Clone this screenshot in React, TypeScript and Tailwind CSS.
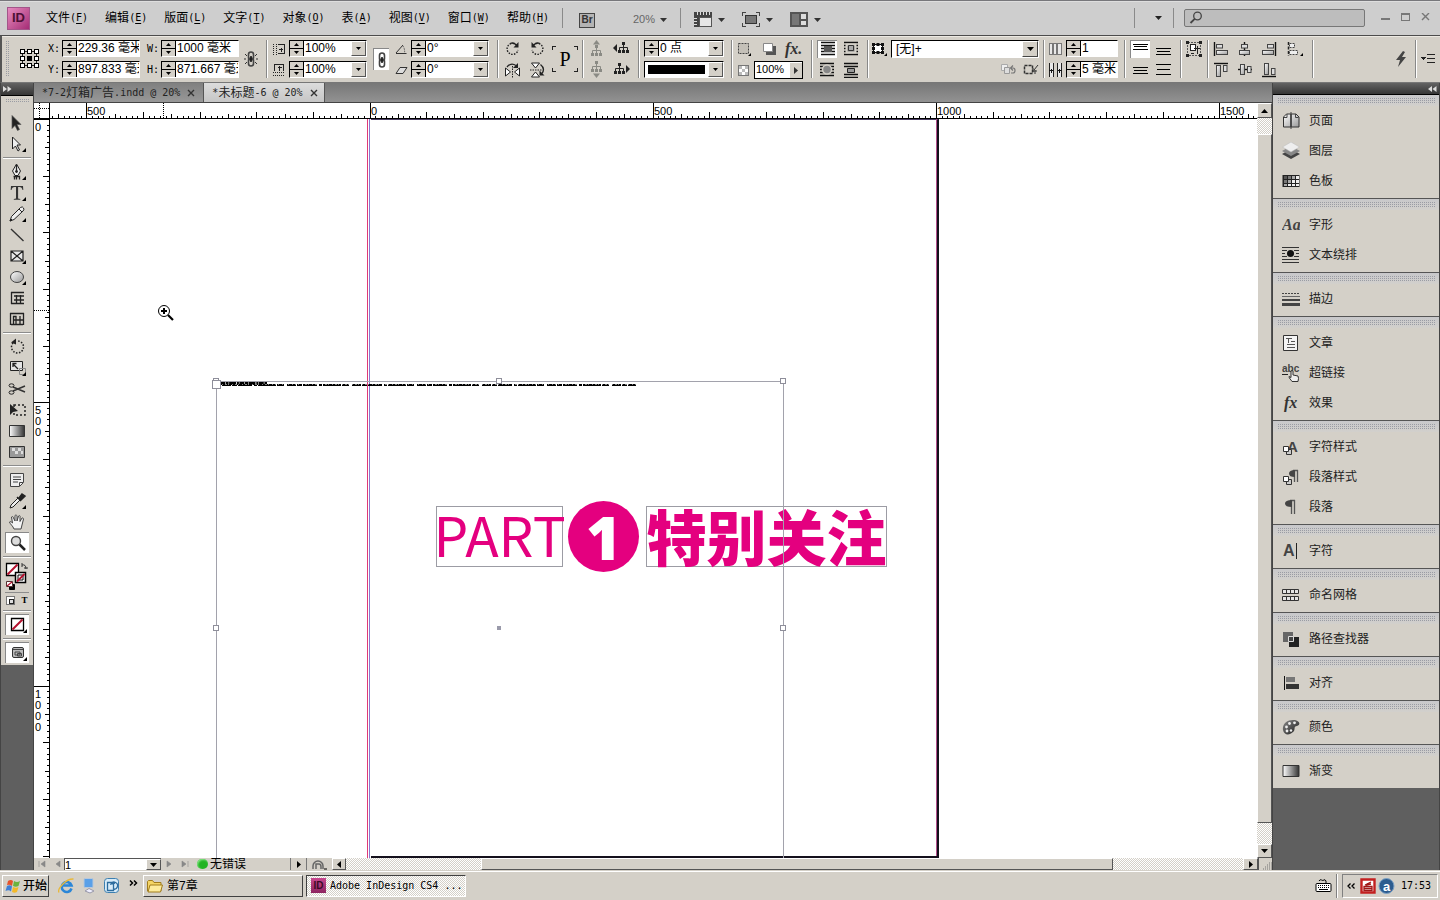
import React, { type ReactNode } from "react";

type SvgProps = { w?: number; h?: number; children: ReactNode; crisp?: boolean };

const Ico = ({ w = 16, h = 16, children, crisp }: SvgProps) => (
  <svg
    width={w}
    height={h}
    viewBox={`0 0 ${w} ${h}`}
    fill="none"
    stroke="#222"
    shapeRendering={crisp ? "crispEdges" : "auto"}
    className="shrink-0"
    aria-hidden="true"
  >
    {children}
  </svg>
);

const Down = ({ color = "#000" }: { color?: string }) => (
  <Ico w={7} h={4}>
    <path d="M0 0h7L3.5 4z" fill={color} stroke="none" />
  </Ico>
);

const Gradients = () => (
  <svg className="absolute h-0 w-0" aria-hidden="true">
    <defs>
      <linearGradient id="lr" x1="0" x2="1" y1="0" y2="0">
        <stop offset="0" stopColor="#fff" />
        <stop offset="1" stopColor="#333" />
      </linearGradient>
      <linearGradient id="soft" x1="0" x2="1" y1="0" y2="1">
        <stop offset="0" stopColor="#fff" />
        <stop offset="1" stopColor="#999" />
      </linearGradient>
      <linearGradient id="dark" x1="0" x2="1" y1="0" y2="1">
        <stop offset="0" stopColor="#888" />
        <stop offset="1" stopColor="#1a1a1a" />
      </linearGradient>
    </defs>
  </svg>
);

/* ---------- menu bar ---------- */

const menus: [string, string][] = [
  ["文件", "F"],
  ["编辑", "E"],
  ["版面", "L"],
  ["文字", "T"],
  ["对象", "O"],
  ["表", "A"],
  ["视图", "V"],
  ["窗口", "W"],
  ["帮助", "H"],
];

const IdLogo = ({ small }: { small?: boolean }) => (
  <span
    className={
      small
        ? "flex h-[15px] w-[15px] shrink-0 items-center justify-center bg-linear-to-b from-[#c9488f] to-[#8d2460] text-[10px] font-bold text-[#3a0a26]"
        : "flex h-[23px] w-[23px] shrink-0 items-center justify-center border border-[#a3558a] bg-linear-to-br from-[#e68bc0] to-[#a52a76] text-[13px] font-bold text-[#4d0f35]"
    }
  >
    ID
  </span>
);

const VLine = () => <span className="h-5 w-px shrink-0 bg-[#8a8a8a]" />;

const MenuBar = () => (
  <header className="flex h-9 shrink-0 items-center border-t border-b border-t-[#77777b] border-b-[#4c4c4c] bg-[#cecece] pl-[7px] shadow-[inset_0_1px_0_#dedede]">
    <IdLogo />
    <nav className="ml-4 flex shrink-0 gap-[17px]">
      {menus.map(([name, key]) => (
        <button key={key} type="button" className="flex items-center text-xs leading-4 text-black">
          {name}
          <span className="font-['DejaVu_Sans_Mono',monospace] text-[10px]">
            (<u className="underline-offset-2">{key}</u>)
          </span>
        </button>
      ))}
    </nav>
    <div className="ml-[13px] flex shrink-0 items-center">
      <VLine />
      <button
        type="button"
        aria-label="Bridge"
        className="mt-1 ml-4 flex h-[15px] w-4 items-center justify-center border border-[#444] bg-[#b4b4b4] text-[10px] leading-none font-bold text-[#333]"
      >
        Br
      </button>
      <button type="button" className="mt-[3px] ml-[38px] flex items-center gap-[5px] text-[11px] text-[#666]">
        20% <Down color="#333" />
      </button>
      <span className="ml-[13px] flex">
        <VLine />
      </span>
      <button type="button" aria-label="查看选项" className="mt-[3px] ml-[13px] flex items-center gap-[6px]">
        <Ico w={18} h={15} crisp>
          <path d="M0 0h18v5H5v10H0z" fill="#444" stroke="none" />
          <path d="M5 5h12v9H5z" fill="#e6e6e6" stroke="#555" />
          <path d="M3.5 0v3M6.5 0v3M9.5 0v3M12.5 0v3M15.5 0v3M0 6.5h3M0 9.5h3M0 12.5h3" stroke="#ddd" />
        </Ico>
        <Down color="#333" />
      </button>
      <button type="button" aria-label="屏幕模式" className="mt-[3px] ml-[17px] flex items-center gap-[6px]">
        <Ico w={18} h={15} crisp>
          <path d="M.5 4V.5H4M14 .5h3.5V4M17.5 11v3.5H14M4 14.5H.5V11" stroke="#444" />
          <path d="M3.5 3.5h11v8h-11z" fill="#777" stroke="#333" />
        </Ico>
        <Down color="#333" />
      </button>
      <button type="button" aria-label="排列文档" className="mt-[3px] ml-[17px] flex items-center gap-[6px]">
        <Ico w={18} h={15} crisp>
          <path d="M0 0h18v15H0z" fill="#555" stroke="none" />
          <path d="M2 2h7v11H2z" fill="#777" stroke="none" />
          <path d="M11 2h5v5h-5zM11 9h5v4h-5z" fill="#ddd" stroke="none" />
        </Ico>
        <Down color="#333" />
      </button>
    </div>
    <div className="ml-auto flex shrink-0 items-center">
      <VLine />
      <button type="button" aria-label="工作区" className="ml-5 flex w-[18px]">
        <Down color="#222" />
      </button>
      <VLine />
      <label className="ml-2.5 flex h-[18px] w-[181px] items-center rounded-[2px] border border-[#777] bg-[#bdbdbd] pl-1">
        <Ico w={14} h={14}>
          <circle cx="8.5" cy="5" r="3.8" stroke="#444" strokeWidth="1.3" />
          <path d="M5.7 7.8L1.5 12" stroke="#444" strokeWidth="1.8" />
        </Ico>
        <input type="search" aria-label="搜索" className="w-full min-w-0 bg-transparent text-xs outline-none" />
      </label>
      <div className="ml-4 flex w-[59px] items-center gap-[11px]">
        <button type="button" aria-label="最小化">
          <Ico w={9} h={10} crisp>
            <path d="M0 5h9v2H0z" fill="#777" stroke="none" />
          </Ico>
        </button>
        <button type="button" aria-label="最大化">
          <Ico w={9} h={10} crisp>
            <path d="M.5.5h8v6.500h-8zM0 1.500h9" stroke="#777" />
          </Ico>
        </button>
        <button type="button" aria-label="关闭">
          <Ico w={9} h={10}>
            <path d="M1 0l7 7M8 0L1 7" stroke="#777" strokeWidth="1.4" />
          </Ico>
        </button>
      </div>
    </div>
  </header>
);

/* ---------- control bar ---------- */

const Spinner = ({ label }: { label: string }) => (
  <span className="flex w-[14px] shrink-0 flex-col divide-y divide-black border-r border-black bg-[#d4d0c8]">
    <button type="button" aria-label={`${label}增加`} className="flex flex-1 items-center justify-center">
      <Ico w={5} h={3}>
        <path d="M0 3h5L2.500 0z" fill="#000" stroke="none" />
      </Ico>
    </button>
    <button type="button" aria-label={`${label}减少`} className="flex flex-1 items-center justify-center">
      <Ico w={5} h={3}>
        <path d="M0 0h5L2.500 3z" fill="#000" stroke="none" />
      </Ico>
    </button>
  </span>
);

const DropButton = ({ label }: { label: string }) => (
  <button
    type="button"
    aria-label={label}
    className="flex w-[15px] shrink-0 items-center justify-center border border-t-white border-r-[#555] border-b-[#555] border-l-white bg-[#d4d0c8]"
  >
    <Ico w={5} h={3}>
      <path d="M0 0h5L2.500 3z" fill="#000" stroke="none" />
    </Ico>
  </button>
);

const boxed = "flex h-[17px] border border-t-black border-r-white border-b-white border-l-black bg-white";

const Field = ({ label, value, drop }: { label: string; value: string; drop?: boolean }) => (
  <span className={`${boxed} min-w-0 flex-1`}>
    <Spinner label={label} />
    <input
      aria-label={label}
      defaultValue={value}
      className="w-full min-w-0 bg-transparent pl-px text-xs leading-[15px] text-black outline-none"
    />
    {drop && <DropButton label={`${label}列表`} />}
  </span>
);

const Rows = ({ className, children }: { className: string; children: ReactNode }) => (
  <div className={`flex shrink-0 flex-col justify-center gap-[3px] ${className}`}>{children}</div>
);
const Row = ({ className = "", children }: { className?: string; children: ReactNode }) => (
  <div className={`flex h-[18px] items-center ${className}`}>{children}</div>
);
const Sep = () => <span className="my-1 w-[2px] shrink-0 border-l border-[#888] bg-white" />;

const LinkIcon = ({ broken }: { broken?: boolean }) => (
  <Ico w={14} h={16}>
    <rect x="4.500" y="1" width="5" height="8" rx="2.500" stroke="#444" strokeWidth="1.600" />
    <rect x="4.500" y="7" width="5" height="8" rx="2.500" stroke="#444" strokeWidth="1.600" />
    <path d="M7 5v6" stroke="#111" strokeWidth="1.500" />
    {broken && <path d="M1 3l2 2M13 3l-2 2M0 8h2M12 8h2M1 13l2-2M13 13l-2-2" stroke="#333" />}
  </Ico>
);

const Rotate = ({ ccw }: { ccw?: boolean }) => (
  <Ico w={15} h={15}>
    <g transform={ccw ? "matrix(-1 0 0 1 15 0)" : undefined}>
      <path d="M11.500 4A5.500 5.500 0 1 0 13 9" stroke="#222" strokeWidth="1.400" strokeDasharray="1.500 1.300" />
      <path d="M5 2.500Q9 1 11 4" stroke="#222" strokeWidth="1.300" />
      <path d="M13.500 1v5.500H8.500z" fill="#222" stroke="none" />
    </g>
  </Ico>
);

const Flip = ({ vertical }: { vertical?: boolean }) => (
  <Ico w={15} h={16}>
    <g transform={vertical ? "rotate(90 7.500 8)" : undefined}>
      <path d="M.5 6v8l5-4zM14.500 6v8l-5-4z" fill="#fff" stroke="#222" />
      <path d="M7.500 4v12" strokeDasharray="1.500 1" />
      <path d="M2 5Q6 0 11 3.500" strokeWidth="1.300" />
      <path d="M13 1v5H8z" fill="#222" stroke="none" />
    </g>
  </Ico>
);

const Tree = ({ arrow }: { arrow: "up" | "down" | "left" | "right" }) => {
  const faint = arrow === "up" || arrow === "down";
  const c = faint ? "#8a8a84" : "#222";
  const oy = arrow === "up" ? 5 : arrow === "down" ? 0 : 2;
  const ox = arrow === "left" ? 5 : 1;
  return (
    <Ico w={17} h={17}>
      <g transform={`translate(${ox} ${oy})`} stroke={c}>
        <path d="M5.500 3v2.500M1.500 8V5.500h8V8M5.500 5v3" />
        <path d="M4 0h3v3H4zM0 8h3v3H0zM4 8h3v3H4zM8 8h3v3H8z" fill={c} stroke="none" />
      </g>
      {arrow === "up" && <path d="M3 4.500h7L6.500 0z" fill={c} stroke="none" />}
      {arrow === "down" && <path d="M3 12.500h7L6.500 17z" fill={c} stroke="none" />}
      {arrow === "left" && <path d="M4 4v8L0 8z" fill={c} stroke="none" />}
      {arrow === "right" && <path d="M13 4v8l4-4z" fill={c} stroke="none" />}
    </Ico>
  );
};

const WrapIcon = ({ kind }: { kind: 0 | 1 | 2 | 3 }) => (
  <Ico w={16} h={16}>
    <path
      d={kind === 3 ? "M1 1.500h14M1 4.500h14M1 12.500h14M1 15.500h14" : "M1 1.500h14M1 4.500h14M1 7.500h14M1 10.500h14M1 13.500h14"}
      strokeWidth="1.400"
      stroke="#111"
    />
    {kind === 0 && <path d="M4 5h8v6H4z" fill="#555" stroke="none" />}
    {kind === 1 && <path d="M3.500 3.500h9v8h-9z" fill="#888" stroke="#d4d0c8" strokeWidth="2" />}
    {kind === 1 && <path d="M5.500 4.500h5v5h-5z" fill="#aaa" stroke="#333" />}
    {kind === 2 && <circle cx="8" cy="7.500" r="4.500" fill="#888" stroke="#d4d0c8" strokeWidth="1.500" />}
    {kind === 3 && <path d="M4.500 6.500h7v4h-7z" fill="#999" />}
  </Ico>
);

const AlignIcon = ({ kind }: { kind: "l" | "c" | "r" | "t" | "m" | "b" }) => {
  const turn = kind === "t" || kind === "m" || kind === "b";
  const k = kind === "t" ? "l" : kind === "m" ? "c" : kind === "b" ? "r" : kind;
  const line = k === "l" ? 1.5 : k === "c" ? 7.5 : 14.5;
  const long = k === "l" ? 3.5 : k === "c" ? 2.5 : 1.5;
  const short = k === "l" ? 3.5 : k === "c" ? 4.5 : 6.5;
  return (
    <Ico w={16} h={16}>
      <g transform={turn ? "matrix(0 1 1 0 0 0)" : undefined}>
        <path d={`M${line} 1v14`} stroke="#111" strokeWidth="1.400" />
        <rect x={long} y={turn ? 3.5 : 9.5} width={k === "c" ? 10 : 11} height="4" fill="url(#soft)" stroke="#444" />
        <rect x={short} y={turn ? 10.5 : 3.5} width="6" height="3.500" fill="#ddd" stroke="#444" />
      </g>
    </Ico>
  );
};

const dots = "bg-[conic-gradient(#9a9ca4_25%,transparent_0)] bg-[length:2px_2px]";

const ControlBar = () => (
  <section
    aria-label="控制"
    className="flex h-[47px] shrink-0 items-stretch overflow-hidden border-b border-l-2 border-b-[#777] border-l-[#555] bg-[#d4d0c8] shadow-[inset_0_1px_0_#ece9e2]"
  >
    <div className="flex w-[18px] shrink-0 items-center pl-[3px]">
      <span className={`h-9 w-1 ${dots}`} />
    </div>
    <div className="flex w-7 shrink-0 items-center">
      <Ico w={20} h={20} crisp>
        <path d="M2.500 2.500h14v14h-14z" />
        <path d="M.5.500h4v4h-4zM7.500.500h4v4h-4zM14.500.500h4v4h-4zM.5 7.500h4v4h-4zM14.500 7.500h4v4h-4zM.5 14.500h4v4h-4zM7.500 14.500h4v4h-4zM14.500 14.500h4v4h-4z" fill="#fff" stroke="#000" />
        <path d="M7 7h5v5H7z" fill="#000" stroke="none" />
      </Ico>
    </div>
    <Rows className="w-[99px] pr-[7px]">
      {[["X:", "229.36 毫米"], ["Y:", "897.833 毫米"]].map(([l, v]) => (
        <Row key={l}>
          <span className="w-[14px] shrink-0 font-['DejaVu_Sans_Mono',monospace] text-[10px]">{l}</span>
          <Field label={l} value={v} />
        </Row>
      ))}
    </Rows>
    <Rows className="w-[97px] pr-[5px]">
      {[["W:", "1000 毫米"], ["H:", "871.667 毫米"]].map(([l, v]) => (
        <Row key={l}>
          <span className="w-[14px] shrink-0 font-['DejaVu_Sans_Mono',monospace] text-[10px]">{l}</span>
          <Field label={l} value={v} />
        </Row>
      ))}
    </Rows>
    <div className="flex w-[22px] shrink-0 items-center">
      <LinkIcon broken />
    </div>
    <Sep />
    <Rows className="w-[105px] pr-1.5 pl-1">
      <Row className="gap-[3px]">
        <Ico w={14} h={14} crisp>
          <path d="M1.500 2v11M4.500 2v11" strokeDasharray="1 1" />
          <path d="M5.500 2.500h7v9h-7M7 7.500h4M9.500 5.500v4" />
        </Ico>
        <Field label="X 缩放百分比" value="100%" drop />
      </Row>
      <Row className="gap-[3px]">
        <Ico w={14} h={14} crisp>
          <path d="M1 12.500h12M1 9.500h12" strokeDasharray="1 1" />
          <path d="M2.500 8V1.500h9V8M7.500 3v5M5.500 4.500h4" />
        </Ico>
        <Field label="Y 缩放百分比" value="100%" drop />
      </Row>
    </Rows>
    <div className="flex w-[22px] shrink-0 items-center">
      <button
        type="button"
        aria-label="约束缩放比例"
        className="flex h-[22px] w-4 items-center justify-center border-t border-l border-[#888] bg-white"
      >
        <LinkIcon />
      </button>
    </div>
    <Rows className="w-[102px] pr-2">
      <Row className="gap-[3px]">
        <Ico w={13} h={12}>
          <path d="M1 10.500h10.500M1 10L8 2" stroke="#333" />
          <path d="M8 3q2 3 1.500 7" stroke="#555" strokeDasharray="1.500 1" />
        </Ico>
        <Field label="旋转角度" value="0°" drop />
      </Row>
      <Row className="gap-[3px]">
        <Ico w={13} h={12}>
          <path d="M1 9.500l4-6h7l-4 6z" fill="#ddd" stroke="#333" />
        </Ico>
        <Field label="切变角度" value="0°" drop />
      </Row>
    </Rows>
    <Sep />
    <Rows className="w-[53px] pl-1.5">
      <Row className="gap-2.5">
        <Rotate />
        <Rotate ccw />
      </Row>
      <Row className="gap-2.5">
        <Flip />
        <Flip vertical />
      </Row>
    </Rows>
    <div className="flex w-[30px] shrink-0 items-center">
      <span className="relative flex h-[26px] w-[26px] items-center justify-center font-['Liberation_Serif',serif] text-xl leading-none">
        P
        <span className="absolute inset-0">
          <Ico w={26} h={26} crisp>
            <path d="M.5 4V.500H4M22 .500h3.500V4M25.500 22v3.500H22M4 25.500H.500V22" />
          </Ico>
        </span>
      </span>
    </div>
    <Sep />
    <Rows className="w-[54px] pl-1.5">
      <Row className="gap-1.5">
        <Tree arrow="up" />
        <Tree arrow="left" />
      </Row>
      <Row className="gap-1.5">
        <Tree arrow="down" />
        <Tree arrow="right" />
      </Row>
    </Rows>
    <Sep />
    <Rows className="w-[91px] pr-[7px] pl-1">
      <Row>
        <Field label="描边粗细" value="0 点" drop />
      </Row>
      <Row>
        <span className={`${boxed} flex-1`}>
          <span className="m-[3px] flex-1 bg-black" />
          <DropButton label="描边类型" />
        </span>
      </Row>
    </Rows>
    <Sep />
    <Rows className="w-[78px] pl-1">
      <Row className="gap-2">
        <Ico>
          <path d="M1.500 2.500h10v10h-10z" fill="#c4c0b8" stroke="#444" strokeDasharray="2 1" />
          <path d="M14 12v3h-3z" fill="#000" stroke="none" />
        </Ico>
        <Ico>
          <path d="M5 5h10v9H5z" fill="#555" stroke="none" />
          <path d="M2.500 2.500h9v8h-9z" fill="#fff" stroke="#888" />
        </Ico>
        <span className="font-['Liberation_Serif',serif] text-base leading-4 font-bold text-[#333] italic">fx.</span>
      </Row>
      <Row className="gap-1">
        <Ico w={13} h={14} crisp>
          <path d="M1.500 2.500h10v10h-10z" fill="#fff" stroke="#777" />
          <path d="M2 3h3v3H2zM8 3h3v3H8zM5 6h3v3H5zM2 9h3v3H2zM8 9h3v3H8z" fill="#bbb" stroke="none" />
        </Ico>
        <span className="flex h-[18px] w-[49px] border border-black bg-white">
          <input
            aria-label="不透明度"
            defaultValue="100%"
            className="w-full min-w-0 bg-transparent pl-px text-[11px] outline-none"
          />
          <button
            type="button"
            aria-label="不透明度滑块"
            className="flex w-[13px] shrink-0 items-center justify-center border-t border-l border-white bg-[#d4d0c8]"
          >
            <Ico w={4} h={7}>
              <path d="M0 0v7l4-3.500z" fill="#333" stroke="none" />
            </Ico>
          </button>
        </span>
      </Row>
    </Rows>
    <Sep />
    <Rows className="w-[54px] pl-1">
      <Row className="gap-1.5">
        <button type="button" aria-label="无文本绕排" className="flex h-[18px] w-5 items-center justify-center border-t border-l border-[#888] bg-white">
          <WrapIcon kind={0} />
        </button>
        <WrapIcon kind={1} />
      </Row>
      <Row className="gap-1.5">
        <span className="flex w-5 justify-center">
          <WrapIcon kind={2} />
        </span>
        <WrapIcon kind={3} />
      </Row>
    </Rows>
    <Sep />
    <Rows className="w-[174px] pr-1 pl-0.5">
      <Row className="gap-1">
        <Ico>
          <path d="M2.500 3.500h9v8h-9z" fill="#fff" stroke="#111" />
          <path d="M1 2h3v3H1zM5.500 2h3v3h-3zM10 2h3v3h-3zM1 6h3v3H1zM10 6h3v3h-3zM1 10h3v3H1zM5.500 10h3v3h-3zM10 10h3v3h-3z" fill="#111" stroke="none" />
          <path d="M16 12v3h-3z" fill="#000" stroke="none" />
        </Ico>
        <span className="flex h-[18px] flex-1 border border-t-black border-r-white border-b-white border-l-black bg-white">
          <select aria-label="对象样式" className="min-w-0 flex-1 appearance-none bg-transparent pl-1 text-xs leading-4 text-black outline-none">
            <option>[无]+</option>
          </select>
          <span className="flex w-4 items-center justify-center border border-t-white border-r-[#444] border-b-[#444] border-l-white bg-[#d4d0c8]">
            <Down />
          </span>
        </span>
      </Row>
      <Row className="justify-end gap-[7px]">
        <Ico>
          <path d="M1.500 2.500h6v6h-6z" fill="#eee" stroke="#aaa" />
          <path d="M4.500 5.500h5v6h-5z" fill="#ddd" stroke="#999" />
          <path d="M11 11h2q2 0 2-2.500T13 6h-2M13 3.500L10.500 6 13 8.500" stroke="#777" strokeWidth="1.200" />
        </Ico>
        <Ico>
          <path d="M1.500 3.500h8v8h-8z" stroke="#333" strokeWidth="1.500" strokeDasharray="3 1" />
          <path d="M15 3l-4 5M10 6v4M12 8v4M9 9h5" stroke="#333" />
        </Ico>
      </Row>
    </Rows>
    <Sep />
    <Rows className="w-[79px] pr-1.5 pl-[3px]">
      <Row className="gap-[3px]">
        <Ico w={15} h={14} crisp>
          <path d="M1.500 1.500h3v11h-3zM5.500 1.500h3v11h-3zM9.500 1.500h4v11h-4z" fill="#e8e8e8" stroke="#777" />
        </Ico>
        <Field label="栏数" value="1" />
      </Row>
      <Row className="gap-[3px]">
        <Ico w={15} h={16} crisp>
          <path d="M1 1h5v14H1zM9 1h5v14H9z" fill="#e8e8e8" stroke="none" />
          <path d="M1.500 1v14M13.500 1v14M5.500 1v14M9.500 1v14" stroke="#222" />
          <path d="M1 8.500h4M10 8.500h4M3.500 6.500v4M11.500 6.500v4" stroke="#111" />
        </Ico>
        <Field label="栏间距" value="5 毫米" />
      </Row>
    </Rows>
    <Sep />
    <Rows className="w-[54px] pl-1">
      <Row className="gap-1.5">
        <button type="button" aria-label="上对齐" className="flex h-[18px] w-5 justify-center border-t border-l border-[#888] bg-white">
          <Ico w={15} h={15} crisp>
            <path d="M0 3.500h15M1 5.500h13M0 8.500h15" stroke="#000" />
          </Ico>
        </button>
        <Ico w={15} h={15} crisp>
          <path d="M0 7.500h15M1 10.500h13M0 13.500h15" stroke="#000" />
        </Ico>
      </Row>
      <Row className="gap-1.5">
        <span className="flex w-5 justify-center">
          <Ico w={15} h={15} crisp>
            <path d="M0 5.500h15M1 8.500h13M0 11.500h15" stroke="#000" />
          </Ico>
        </span>
        <Ico w={15} h={15} crisp>
          <path d="M0 2.500h15M1 7.500h13M0 12.500h15" stroke="#000" />
        </Ico>
      </Row>
    </Rows>
    <Sep />
    <Rows className="w-[25px] pl-1">
      <Row>
        <Ico crisp>
          <path d="M1.500 1.500h13v13h-13z" stroke="#555" strokeDasharray="2 1" />
          <path d="M0 0h3v3H0zM13 0h3v3h-3zM0 13h3v3H0zM13 13h3v3h-3z" fill="#222" stroke="none" />
          <path d="M4.500 3.500h5v6h-5z" fill="#fff" />
          <path d="M8 7.500h6M11.500 5v8M5 12.500h3" />
        </Ico>
      </Row>
      <Row>{null}</Row>
    </Rows>
    <Sep />
    <Rows className="w-[103px] pl-1">
      <Row className="gap-2">
        <AlignIcon kind="l" />
        <AlignIcon kind="c" />
        <AlignIcon kind="r" />
        <Ico w={18} h={16}>
          <path d="M3.500 1v14" strokeDasharray="3 1.500" strokeWidth="1.500" />
          <path d="M4.500 2.500h5v4h-5zM4.500 9.500h8v4h-8z" fill="#eee" stroke="#444" strokeDasharray="2 1" />
          <path d="M18 12v3h-3z" fill="#000" stroke="none" />
        </Ico>
      </Row>
      <Row className="gap-2">
        <AlignIcon kind="t" />
        <AlignIcon kind="m" />
        <AlignIcon kind="b" />
      </Row>
    </Rows>
    <Sep />
    <div className="ml-auto flex shrink-0 items-center">
      <Ico w={14} h={18}>
        <path d="M9 1L2 10h4l-2 7 8-10H8l3-5z" fill="#444" stroke="none" />
      </Ico>
      <span className="ml-[7px] flex h-[46px]">
        <Sep />
      </span>
      <button type="button" aria-label="面板菜单" className="mr-1 ml-1 flex">
        <Ico w={15} h={12} crisp>
          <path d="M0 4h5L2.500 7z" fill="#222" stroke="none" />
          <path d="M6 1.500h8M6 5.500h8M6 9.500h8" stroke="#222" />
        </Ico>
      </button>
    </div>
  </section>
);

/* ---------- toolbox ---------- */

const corner = <path d="M19 14v4h-4z" fill="#000" stroke="none" />;

const toolGroups: { name: string; icon: ReactNode }[][] = [
  [
    { name: "选择", icon: <path d="M5 2.500v13l3-3 2.500 5 2-1-2.500-5h4z" fill="#222" stroke="#555" strokeWidth=".7" /> },
    { name: "直接选择", icon: <><path d="M5.500 3v12l3-3 2.500 5 1.500-1-2.500-5h3.500z" fill="#eee" stroke="#222" />{corner}</> },
  ],
  [
    { name: "钢笔", icon: <><path d="M9.500 2L5.500 9l2.500 4.500h3L13.500 9z" fill="#eee" /><path d="M9.500 3v6M6.500 14.500h6v3M7.500 14.500v3M9.500 14.500v3" strokeWidth="1.300" /><circle cx="9.500" cy="9.500" r="1" fill="#222" />{corner}</> },
    { name: "文字", icon: <><path d="M4 3h12l.3 4h-.8q-.5-3-3-3h-1.400v11.500l2.200.5v.8H6.800V16l2.200-.5V4H7.500q-2.500 0-3 3h-.8z" fill="#333" stroke="none" />{corner}</> },
    { name: "铅笔", icon: <><path d="M3 17l1.500-4.500 9-9q2-1.500 3 .500t-.500 3l-9 8.500z" fill="#eee" /><path d="M12 5l3 3M3 17l2-1-1-1z" fill="#222" />{corner}</> },
    { name: "直线", icon: <path d="M4 4l12.500 12" stroke="#333" strokeWidth="1.400" /> },
    { name: "矩形框架", icon: <><path d="M4 5h12v10H4zM4 5l12 10M16 5L4 15" fill="#e8e8e8" strokeWidth="1.200" />{corner}</> },
    { name: "椭圆", icon: <><ellipse cx="10" cy="10" rx="6.500" ry="5.500" fill="url(#soft)" stroke="#444" />{corner}</> },
    { name: "水平网格", icon: <path d="M4 4.500h13M4.500 4v12M7 8h10M7 12h10M4 15.500h13M9.500 7v8M13.500 7v8" strokeWidth="1.300" /> },
    { name: "垂直网格", icon: <path d="M3 4.500h14M3.500 4v12M16.500 4v12M6.500 7v8M9 7v8M13 7v8M6 7.500h3.500M6 11h10M4 15.500h12" strokeWidth="1.300" /> },
  ],
  [
    { name: "旋转", icon: <><path d="M6 6a6 6 0 1 0 5-2" strokeWidth="1.500" strokeDasharray="1.500 1.500" /><path d="M4 5.500l5-4v6z" fill="#222" stroke="none" /></> },
    { name: "缩放", icon: <><path d="M3.500 3.500h12v9h-12z" fill="#e4e4e4" /><path d="M6 6l5 5M6 9V5.500h3.500" strokeWidth="1.300" /><path d="M12.500 10.500h6v6h-6z" stroke="#888" />{corner}</> },
    { name: "剪刀", icon: <><path d="M6 12L18 7M6 8l12 5" stroke="#333" strokeWidth="1.500" /><ellipse cx="4.500" cy="6.500" rx="2.500" ry="1.700" /><ellipse cx="4.500" cy="13.500" rx="2.500" ry="1.700" /></> },
    { name: "自由变换", icon: <><path d="M7 5h11v10H7z" strokeDasharray="2 2" strokeWidth="1.500" /><path d="M3 4v11l3-3 5-1z" fill="#222" stroke="none" /></> },
    { name: "渐变色板", icon: <path d="M2.500 4.500h15v11h-15z" fill="url(#lr)" stroke="#333" /> },
    { name: "渐变羽化", icon: <><path d="M2.500 4.500h15v11h-15z" fill="#999" stroke="#333" /><path d="M5 6h3v3H5zM11 6h3v3h-3zM8 9h3v3H8zM14 9h2v3h-2z" fill="#ddd" stroke="none" /></> },
  ],
  [
    { name: "附注", icon: <><path d="M3.500 3.500h13v9l-4 4h-9z" fill="#eee" stroke="#444" /><path d="M6 7h8M6 9.500h8M6 12h5M16 12.500h-3.500V16" stroke="#444" /></> },
    { name: "吸管", icon: <><path d="M3 17l1-3 7-7 2 2-7 7z" fill="#eee" /><path d="M10 6l4 4M12 7l3-4 3 2-4 4z" fill="#222" strokeWidth="1.500" />{corner}</> },
    { name: "抓手", icon: <path d="M7 17c-1-3-4-5-4.500-7 1-1 2 0 3 1L4.500 5c1-1 2 0 2 1L8 9V3.500c1-1 2 0 2 .500V9l1.500-5c1-1 2 0 1.500 1L13 9.500 15 6c1-.5 1.500.5 1.500 1L15 13l-1 4z" fill="#f4f4f4" stroke="#444" /> },
    { name: "缩放显示", icon: <><circle cx="8" cy="8" r="4.500" fill="#ddd" stroke="#444" strokeWidth="1.400" /><path d="M11.500 11.500l5.500 5.500" stroke="#222" strokeWidth="2.500" /></> },
  ],
];

const ToolSep = () => <span className="mx-0.5 mt-[3px] mb-0.5 h-[2px] border-t border-[#8c8c8c] bg-white" />;

const NoneBox = () => (
  <>
    <path d="M.5.500h12v12H.500z" fill="#fff" stroke="#000" strokeWidth="1.300" />
    <path d="M1.500 11.500l10-10" stroke="#b5122f" strokeWidth="2" />
  </>
);

const Toolbox = () => (
  <aside aria-label="工具" className="flex w-[34px] shrink-0 flex-col border-r border-l border-[#444] bg-[#5f5f5f]">
    <div className="flex h-3 shrink-0 items-center bg-linear-to-b from-[#636363] to-[#363636] pl-0.5">
      <Ico w={9} h={6}>
        <path d="M0 0v6l4-3zM4.500 0v6l4-3z" fill="#ddd" stroke="none" />
      </Ico>
    </div>
    <div className="flex flex-col border-t border-black bg-[#d4d0c8]">
      <span className={`mx-1 mt-[3px] mb-2.5 h-[3px] ${dots}`} />
      {toolGroups.map((g, i) => (
        <React.Fragment key={i}>
          {g.map((t) => (
            <button
              key={t.name}
              type="button"
              aria-label={t.name}
              className={
                t.name === "缩放显示"
                  ? "mx-1 flex h-[21px] items-center justify-center border-t border-l border-[#888] bg-white"
                  : "flex h-[21px] items-center justify-center"
              }
            >
              <Ico w={20} h={20}>{t.icon}</Ico>
            </button>
          ))}
          <ToolSep />
        </React.Fragment>
      ))}
      <button type="button" aria-label="填色和描边" className="mt-0.5 flex h-[30px] justify-center">
        <Ico w={24} h={29}>
          <g transform="translate(1 1)"><NoneBox /></g>
          <path d="M10.500 10.500h10v10h-10z" fill="#fff" stroke="#000" strokeWidth="1.500" />
          <path d="M13 13h5v5h-5z" fill="#fff" stroke="#000" />
          <path d="M12 19.500l7.500-7.500" stroke="#b5122f" strokeWidth="1.800" />
          <path d="M17 3q4-1 4 4M17 1v4M19 6h4" stroke="#333" />
          <path d="M4.500 22.500h5v5h-5z" fill="#000" stroke="#000" />
          <path d="M1.500 19.500h6v5h-6z" fill="#fff" stroke="#533" />
          <path d="M2 24l5-4" stroke="#b5122f" strokeWidth="1.300" />
        </Ico>
      </button>
      <span className="mx-1 border-t border-[#8c8c8c]" />
      <div className="flex h-3.5 items-center justify-center gap-1.5">
        <Ico w={9} h={9} crisp>
          <path d="M.5.500h8v8h-8z" fill="#fff" stroke="#777" />
          <path d="M3.500 3.500h4v4h-4z" fill="#ddd" stroke="#222" />
        </Ico>
        <span className="font-['Liberation_Serif',serif] text-[9px] leading-none font-bold">T</span>
      </div>
      <ToolSep />
      <button type="button" aria-label="应用无" className="mx-1 flex h-[21px] items-center justify-center border-t border-l border-[#888] bg-white">
        <Ico w={20} h={20}>
          <g transform="translate(3 3)"><NoneBox /></g>
          {corner}
        </Ico>
      </button>
      <ToolSep />
      <button type="button" aria-label="视图模式" className="mx-1 mb-0.5 flex h-[21px] items-center justify-center border-t border-l border-[#888] bg-white">
        <Ico w={20} h={20}>
          <rect x="4.500" y="4.500" width="11" height="10" rx="1.500" fill="#bbb" stroke="#333" />
          <path d="M5 6.500h10M7 9h5v3H7zM9.500 10.500h4V13h-4z" stroke="#444" />
          {corner}
        </Ico>
      </button>
    </div>
  </aside>
);

/* ---------- document ---------- */

const STEP = 283.3 / 50;

const ticks = (origin: number, length: number) => {
  const out: { p: number; i: number }[] = [];
  for (let i = Math.ceil(-origin / STEP); origin + i * STEP < length; i++) {
    out.push({ p: Math.round(origin + i * STEP), i });
  }
  return out;
};
const tickSize = (i: number) => (i % 50 === 0 ? 15 : i % 10 === 0 ? 6 : i % 5 === 0 ? 4 : 2);

const HRuler = () => (
  <svg className="h-4 w-full bg-white" shapeRendering="crispEdges" aria-hidden="true">
    {ticks(319.5, 1207).map(({ p, i }) => (
      <React.Fragment key={i}>
        <rect x={p} y={15 - tickSize(i)} width="1" height={tickSize(i)} fill="#000" />
        {i % 50 === 0 && (
          <text x={p + 1} y="12" fontSize="11" fill="#000">
            {Math.abs(i * 10)}
          </text>
        )}
      </React.Fragment>
    ))}
    <path d="M113.500 0v15" stroke="#000" strokeDasharray="1 1" />
    <rect y="15" width="100%" height="1" fill="#000" />
  </svg>
);

const VRuler = () => (
  <svg className="h-full w-4 shrink-0 bg-white" shapeRendering="crispEdges" aria-hidden="true">
    {ticks(0, 800).map(({ p, i }) => (
      <React.Fragment key={i}>
        <rect x={15 - tickSize(i)} y={p} width={tickSize(i)} height="1" fill="#000" />
        {i % 50 === 0 &&
          String(i * 10)
            .split("")
            .map((d, n) => (
              <text key={n} x="1" y={p + 12 + n * 11} fontSize="11" fill="#000">
                {d}
              </text>
            ))}
      </React.Fragment>
    ))}
    <path d="M0 191.500h15" stroke="#000" strokeDasharray="1 1" />
    <rect x="15" width="1" height="100%" fill="#000" />
  </svg>
);

const tabs = [
  { parts: ["*7-2", "灯箱广告", ".indd @ 20%"], active: false },
  { parts: ["*", "未标题", "-6 @ 20%"], active: true },
];

const Tabs = () => (
  <div role="tablist" className="flex h-5 shrink-0 border-b border-[#444] bg-linear-to-b from-[#777] to-[#929292]">
    {tabs.map((t) => (
      <div
        key={t.parts[1]}
        className={
          t.active
            ? "flex items-center gap-[7px] border-r border-[#555] bg-linear-to-b from-[#dcdcdc] to-[#c6c6c6] pr-1.5 pl-2"
            : "flex items-center gap-[7px] border-r border-[#555] bg-linear-to-b from-[#808080] to-[#989898] pr-2 pl-2"
        }
      >
        <button
          type="button"
          role="tab"
          aria-selected={t.active}
          className="flex items-center font-['DejaVu_Sans_Mono',monospace] text-[10px] leading-4 whitespace-pre text-[#222]"
        >
          {t.parts[0]}
          <span className="font-['Liberation_Sans','Noto_Sans_CJK_SC',sans-serif] text-xs leading-4">{t.parts[1]}</span>
          {t.parts[2]}
        </button>
        <button type="button" aria-label="关闭标签">
          <Ico w={8} h={8}>
            <path d="M1 1l6 6M7 1L1 7" stroke="#333" strokeWidth="1.400" />
          </Ico>
        </button>
      </div>
    ))}
  </div>
);

const handles: [number, number][] = [
  [166, 262],
  [449, 262],
  [733, 262],
  [166, 509],
  [733, 509],
];

const Canvas = () => (
  <div className="relative min-w-0 flex-1 overflow-hidden bg-white">
    <div className="absolute top-0 left-[321px] h-[739px] w-[568px] border-t border-r-2 border-b-2 border-[#14101c] border-t-[#4b3f63]" />
    <div className="absolute top-0 left-[317px] h-[739px] w-px bg-[#e03a78]" />
    <div className="absolute top-0 left-[319px] h-[739px] w-px bg-[#8878d0]" />
    <div className="absolute top-0 left-[886px] h-[737px] w-px bg-[#b0508c]" />

    <div className="absolute top-[387px] left-[386px] flex h-[61px] w-[127px] items-center justify-center border border-[#9c9ca4] pb-1.5 font-['Noto_Sans_CJK_SC',sans-serif] text-[55px] leading-none font-normal text-[#e4007f]">
      PART
    </div>
    <div className="absolute top-[382px] left-[518px] flex h-[71px] w-[71px] items-center justify-center rounded-full bg-[#e4007f] font-['Open_Sans',sans-serif] text-[60px] leading-none font-extrabold text-white">
      1
    </div>
    <div className="absolute top-[387px] left-[596px] flex h-[61px] w-[241px] items-center justify-center border border-[#9c9ca4] pb-1 font-['Noto_Sans_CJK_SC',sans-serif] text-[60px] leading-none font-black whitespace-nowrap text-[#e4007f]">
      特别关注
    </div>

    <div className="absolute top-[262px] left-[166px] h-[600px] w-[568px] border border-[#a2a2ac]" />
    <svg className="absolute top-[262px] left-[170px] h-2 w-[420px]" aria-hidden="true">
      <path d="M0 2.500h47" stroke="#000" strokeWidth="3" strokeDasharray="5 .6 3 .5 7 .8 2 .5" />
      <path d="M2 4h414" stroke="#000" strokeWidth="2" strokeDasharray="9 1 5 1 14 2 3 1 18 1 7 3" />
      <path d="M2 3.500h414" stroke="#fff" strokeDasharray="1 2 2 1 1 3" strokeOpacity=".5" />
    </svg>
    {handles.map(([x, y]) => (
      <span
        key={`${x}-${y}`}
        className="absolute h-[6px] w-[6px] -translate-x-1/2 -translate-y-1/2 border border-[#8e8e9a] bg-white"
        style={{ left: x, top: y }}
      />
    ))}
    <span className="absolute top-[261px] left-[162px] h-[9px] w-[9px] border border-[#8e8e9a] bg-white" />
    <span className="absolute top-[507px] left-[447px] h-1 w-1 bg-[#9a9aaa]" />
    <svg className="absolute top-[185px] left-[107px] h-[18px] w-[18px]" fill="none" stroke="#000" aria-hidden="true">
      <circle cx="7" cy="7" r="5.500" />
      <path d="M4 7h6M7 4v6" strokeWidth="2" />
      <path d="M11 11l5 5" strokeWidth="2.200" />
    </svg>
  </div>
);

const bevel = "border border-t-white border-r-[#555] border-b-[#555] border-l-white bg-[#d4d0c8]";
const track = "bg-white bg-[conic-gradient(#d4d0c8_25%,transparent_0_50%,#d4d0c8_0_75%,transparent_0)] bg-[length:2px_2px]";

const Nav = ({ d, label }: { d: string; label: string }) => (
  <button type="button" aria-label={label} className="flex w-4 shrink-0 items-center justify-center">
    <Ico w={8} h={8}>
      <path d={d} fill="#888" stroke="#888" strokeWidth=".6" />
    </Ico>
  </button>
);

const StatusBar = () => (
  <div className="flex h-3 shrink-0 overflow-hidden bg-[#d4d0c8]">
    <div className="flex w-[30px] shrink-0">
      <Nav label="第一页" d="M1 1v6M7 1v6L3 4z" />
      <Nav label="上一页" d="M6 1v6L2 4z" />
    </div>
    <div className="flex w-[97px] shrink-0 border-t border-l border-[#555] bg-white">
      <input aria-label="页码" defaultValue="1" className="w-full min-w-0 bg-transparent text-[11px] leading-[11px] outline-none" />
      <span className={`flex w-[15px] shrink-0 items-center justify-center ${bevel}`}>
        <Down />
      </span>
    </div>
    <Nav label="下一页" d="M2 1v6l4-3z" />
    <Nav label="末页" d="M1 1v6l4-3zM7 1v6" />
    <div className="flex w-[98px] shrink-0 items-center gap-0.5 border-r border-[#777] pl-1">
      <span className="h-2.5 w-[11px] rounded-full bg-[#22b322] shadow-[inset_1px_1px_2px_#8be88b]" />
      <span className="text-xs leading-3">无错误</span>
    </div>
    <button type="button" aria-label="印前检查菜单" className="flex w-4 shrink-0 items-center justify-center border-r border-[#777]">
      <Ico w={4} h={7}>
        <path d="M0 0v7l4-3.500z" fill="#000" stroke="none" />
      </Ico>
    </button>
    <button type="button" aria-label="实时预检" className="flex w-[25px] shrink-0 items-center justify-center">
      <Ico w={16} h={11}>
        <path d="M1 10V7a5 5 0 0 1 10 0v3M4 10V5h3q2 0 2 3v2" stroke="#666" strokeWidth="1.500" />
        <path d="M12 10h3" stroke="#000" />
      </Ico>
    </button>
    <div className={`flex min-w-0 flex-1 ${track}`}>
      <button type="button" aria-label="向左滚动" className={`flex w-[14px] items-center justify-center ${bevel}`}>
        <Ico w={4} h={7}>
          <path d="M4 0v7L0 3.500z" fill="#000" stroke="none" />
        </Ico>
      </button>
      <div className="flex min-w-0 flex-1">
        <span className="w-[15%]" />
        <span className={`w-[70.5%] ${bevel}`} />
      </div>
      <button type="button" aria-label="向右滚动" className={`flex w-[15px] items-center justify-center ${bevel}`}>
        <Ico w={4} h={7}>
          <path d="M0 0v7l4-3.500z" fill="#000" stroke="none" />
        </Ico>
      </button>
    </div>
    <span className="flex w-[14px] shrink-0 items-end justify-end border-l border-[#555] bg-[#d4d0c8]">
      <Ico w={10} h={10}>
        <path d="M1 9h9M3 7h7M5 5h5M7 3h3" stroke="#777" strokeDasharray="1 1" />
      </Ico>
    </span>
  </div>
);

const DocumentArea = () => (
  <main className="flex min-w-0 flex-1 flex-col">
    <Tabs />
    <div className="flex min-h-0 flex-1">
      <div className="flex min-w-0 flex-1 flex-col">
        <div className="flex h-4 shrink-0">
          <svg className="h-4 w-4 shrink-0 bg-white" shapeRendering="crispEdges" stroke="#000" aria-hidden="true">
            <path d="M5.500 0v15M0 5.500h15" strokeDasharray="1 1" />
            <path d="M15.500 0v16M0 15.500h16" />
          </svg>
          <HRuler />
        </div>
        <div className="flex min-h-0 flex-1">
          <VRuler />
          <Canvas />
        </div>
      </div>
      <div className={`flex w-[15px] shrink-0 flex-col ${track}`}>
        <button type="button" aria-label="向上滚动" className={`flex h-[15px] items-center justify-center ${bevel}`}>
          <Ico w={7} h={4}>
            <path d="M0 4h7L3.500 0z" fill="#000" stroke="none" />
          </Ico>
        </button>
        <div className="flex min-h-0 flex-1 flex-col pt-4">
          <span className={`h-[97%] ${bevel}`} />
        </div>
        <button type="button" aria-label="向下滚动" className={`flex h-[14px] items-center justify-center ${bevel}`}>
          <Down />
        </button>
      </div>
    </div>
    <StatusBar />
  </main>
);

/* ---------- panel dock ---------- */

const serifI = "Liberation Serif, serif";

const docks: { name: string; icon: ReactNode }[][] = [
  [
    { name: "页面", icon: <><path d="M1.500 5l3-3H9v13H1.500zM17 5l-3-3H9v13h8z" fill="url(#soft)" stroke="#333" /><path d="M9 0v17M2 5.500h3V2M16.500 5.500h-3V2" stroke="#444" /></> },
    { name: "图层", icon: <><path d="M9 7l9 5-9 5-9-5z" fill="#444" stroke="none" /><path d="M9 4l9 5-9 5-9-5z" fill="#888" stroke="none" /><path d="M9 0l8.500 5L9 10 .5 5z" fill="#eee" stroke="#bbb" strokeWidth=".5" /></> },
    { name: "色板", icon: <><path d="M.5 3h17v12H.500z" fill="#222" stroke="none" /><path d="M2 4h3v3H2z" fill="#555" stroke="none" /><path d="M6 4h3v3H6zM2 8h3v3H2z" fill="#777" stroke="none" /><path d="M10 4h3v3h-3zM6 8h3v3H6zM2 12h3v2H2z" fill="#aaa" stroke="none" /><path d="M14 4h3v3h-3zM10 8h3v3h-3zM14 8h3v3h-3zM6 12h3v2H6zM10 12h3v2h-3zM14 12h3v2h-3z" fill="#eee" stroke="none" /></> },
  ],
  [
    { name: "字形", icon: <text x="0" y="14" fontFamily={serifI} fontSize="16" fontStyle="italic" fontWeight="bold" fill="#444" stroke="none">Aa</text> },
    { name: "文本绕排", icon: <><path d="M0 1.500h17M0 4.500h5M12 4.500h5M0 7.500h3M14 7.500h3M0 10.500h5M12 10.500h5M0 13.500h17M0 16.500h17" stroke="#333" /><circle cx="8.500" cy="7.500" r="3.500" fill="#111" stroke="none" /></> },
  ],
  [
    { name: "描边", icon: <><path d="M0 3.500h18" strokeDasharray="2 1" stroke="#444" /><path d="M0 6.500h18" stroke="#666" /><path d="M0 10h18" strokeWidth="2" stroke="#444" /><path d="M0 14.500h18" strokeWidth="3" stroke="#444" /></> },
  ],
  [
    { name: "文章", icon: <><path d="M1.500 1.500h14v15h-14z" fill="#f4f4f4" stroke="#333" /><path d="M4 4.500h6M6.500 4.500V9M9 7.500h4M5 10.500h8M5 13.500h8" stroke="#555" /></> },
    { name: "超链接", icon: <><text x="0" y="8" fontFamily="Liberation Sans, sans-serif" fontSize="10" fontWeight="bold" fill="#444" stroke="none">abc</text><path d="M0 10.500h6" /><path d="M10 17.500c-1-2-3-3-3-5l2 1V7q1-1 2 0v4l5 1q1 2 0 5.500z" fill="#eee" stroke="#333" /></> },
    { name: "效果", icon: <text x="2" y="14" fontFamily={serifI} fontSize="16" fontStyle="italic" fontWeight="bold" fill="#333" stroke="none">fx</text> },
  ],
  [
    { name: "字符样式", icon: <><text x="5" y="14" fontFamily="Liberation Sans, sans-serif" fontSize="15" fontWeight="bold" fill="#444" stroke="none">A</text><path d="M4.500 11.500h5v5h-5z" fill="#ccc" stroke="#333" /><path d="M1.500 8.500h5v5h-5z" fill="#fff" stroke="#333" /></> },
    { name: "段落样式", icon: <><path d="M15.500 2v12M12.500 2v12M16 2.500h-5" stroke="#555" strokeWidth="1.300" /><path d="M13 2v7q-6 0-6-3.500T13 2" fill="#444" stroke="none" /><path d="M4.500 11.500h5v5h-5z" fill="#ccc" stroke="#333" /><path d="M1.500 8.500h5v5h-5z" fill="#fff" stroke="#333" /></> },
    { name: "段落", icon: <><path d="M12.500 2v14M9.500 2v14M13 2.500H8" stroke="#555" strokeWidth="1.300" /><path d="M10 2v7q-7 0-7-3.500T10 2" fill="#444" stroke="none" /></> },
  ],
  [{ name: "字符", icon: <><text x="1" y="14" fontFamily="Liberation Sans, sans-serif" fontSize="16" fontWeight="bold" fill="#444" stroke="none">A</text><path d="M14.500 1v16" stroke="#222" /></> }],
  [{ name: "命名网格", icon: <><path d="M.5 3.500h16v4H.500zM.5 10.500h16v4H.500z" fill="#e4e4e4" stroke="#333" /><path d="M4.500 3v5M8.500 3v5M12.500 3v5M4.500 10v5M8.500 10v5M12.500 10v5" stroke="#333" /></> }],
  [{ name: "路径查找器", icon: <><path d="M1 2h10v10H1z" fill="#666" stroke="none" /><path d="M7 7h10v10H7z" fill="#222" stroke="none" /><path d="M6.500 6.500h5v5h-5z" fill="#444" stroke="#ddd" /></> }],
  [{ name: "对齐", icon: <><path d="M2.500 2v14" stroke="#111" /><path d="M4 3h9v5H4z" fill="#777" stroke="none" /><path d="M4 10h13v5H4z" fill="#333" stroke="none" /></> }],
  [{ name: "颜色", icon: <><path d="M1 12C0 6 5 2 11 2c7 0 8 5 4 6-4 0-1 4-4 6-4 4-9 3-10-2z" fill="url(#dark)" stroke="none" /><g fill="#eee" stroke="none"><circle cx="4.500" cy="9" r="1.400" /><circle cx="7.500" cy="5.500" r="1.400" /><circle cx="12.500" cy="4.800" r="1.400" /><circle cx="5" cy="13" r="1.400" /><circle cx="9" cy="12.500" r="1.200" /></g></> }],
  [{ name: "渐变", icon: <path d="M1 3.500h16v11H1z" fill="url(#lr)" stroke="#333" /> }],
];

const Dock = () => (
  <aside aria-label="面板" className="flex w-[168px] shrink-0 flex-col border-r border-l border-[#444] bg-[#5f5f5f]">
    <div className="flex h-3 shrink-0 items-center justify-end border-b border-black bg-linear-to-b from-[#636363] to-[#363636] pr-0.5">
      <Ico w={9} h={6}>
        <path d="M4 0v6L0 3zM8.500 0v6l-4-3z" fill="#ddd" stroke="none" />
      </Ico>
    </div>
    {docks.map((g, i) => (
      <div key={i} className="flex shrink-0 flex-col border-b border-[#555] bg-[#d4d0c8] pb-0.5 last:border-[#5f5f5f]">
        <div className="flex h-[11px] flex-col bg-linear-to-b from-[#c8c8cb] to-[#d2d0cc] px-1 pt-[3px]">
          <span className={`h-[5px] ${dots}`} />
        </div>
        {g.map((p) => (
          <button key={p.name} type="button" className="flex h-[30px] items-center gap-[9px] pl-[9px] text-left text-xs text-[#222]">
            <Ico w={18} h={18}>{p.icon}</Ico>
            {p.name}
          </button>
        ))}
      </div>
    ))}
  </aside>
);

/* ---------- taskbar ---------- */

const Taskbar = () => (
  <footer className="flex h-[30px] shrink-0 items-center border-t border-[#d4d0c8] bg-[#d4d0c8] px-0.5 shadow-[inset_0_1px_0_#fff]">
    <button type="button" className="flex h-[22px] w-[47px] items-center gap-0.5 border border-t-white border-r-[#404040] border-b-[#404040] border-l-white pl-0.5 text-xs font-medium">
      <Ico w={16} h={16}>
        <g stroke="none">
          <path d="M3 3q3-2 5 0L7 8Q5 6 2 7z" fill="#e5532c" />
          <path d="M9 3q3 2 6 0l-1.500 5q-3 1.500-5.500 0z" fill="#6cb33f" />
          <path d="M2 8q3-1.500 5 .5l-1 5q-2-2-5.500-.5z" fill="#3f7fd6" />
          <path d="M8 9q3 1.500 5.500 0L12 14q-2.500 1.500-5 0z" fill="#f4b928" />
        </g>
      </Ico>
      开始
    </button>
    <div className="ml-[9px] flex items-center gap-[7px]">
      <button type="button" aria-label="Internet Explorer">
        <Ico w={17} h={17}>
          <path d="M13.500 11.500A5 5 0 1 1 13.500 8.500H5" stroke="#2a86d8" strokeWidth="2.600" />
          <path d="M1 15.500C-1 12 8 1.500 15.500 2" stroke="#e9b93a" strokeWidth="1.300" />
        </Ico>
      </button>
      <button type="button" aria-label="显示桌面">
        <Ico w={14} h={17}>
          <rect x="2" y="1.500" width="9" height="9" rx="1" fill="#5aa0e8" stroke="#b9c8da" />
          <path d="M3 14l4-2.500 5 2.500-4 2z" fill="#eef" stroke="#99a" />
        </Ico>
      </button>
      <button type="button" aria-label="Outlook">
        <Ico w={17} h={17}>
          <rect x="1.500" y="1.500" width="14" height="14" rx="3" fill="#d7ebf8" stroke="#3c7fb0" />
          <path d="M4.500 5.500h6v8h-6zM10 12a3.500 3.500 0 1 0-2-5l4-1" stroke="#2c6c9e" strokeWidth="1.300" />
        </Ico>
      </button>
    </div>
    <button type="button" aria-label="更多" className="mt-[-6px] ml-[9px] w-[14px] text-left">
      <Ico w={9} h={6}>
        <path d="M1 .5l2.500 2.500L1 5.500M5 .5l2.500 2.500L5 5.500" strokeWidth="1.500" stroke="#000" />
      </Ico>
    </button>
    <button type="button" className="flex h-[22px] w-[160px] items-center gap-1 border border-t-white border-r-[#404040] border-b-[#404040] border-l-white pl-[3px] text-xs">
      <Ico w={16} h={14}>
        <path d="M.5 12V2.500l1-1h4l1.500 2h7V12z" fill="#f5d565" stroke="#a17c1d" />
        <path d="M1 13l2-7h12.500l-2 7z" fill="#fdeb9c" stroke="#a17c1d" />
      </Ico>
      第7章
    </button>
    <button type="button" className={`ml-[3px] flex h-[22px] w-[160px] items-center gap-1 border border-t-[#404040] border-r-white border-b-white border-l-[#404040] pl-1 ${track}`}>
      <IdLogo small />
      <span className="font-['DejaVu_Sans_Mono',monospace] text-[10px] whitespace-nowrap">Adobe InDesign CS4 ...</span>
    </button>
    <div className="ml-auto flex items-center">
      <Ico w={17} h={15}>
        <rect x="1" y="5.500" width="15" height="8" rx="1" fill="#fff" stroke="#000" />
        <path d="M3 7.500h11M3 9.500h11" strokeDasharray="1 1" stroke="#000" />
        <path d="M4 11.500h9" stroke="#000" />
        <path d="M4 3q1-2 2.500-1t2.500 0 2 1v2" stroke="#000" />
      </Ico>
      <span className="ml-1 h-6 w-[2px] border-l border-[#808080] bg-white" />
      <div className="ml-1 flex h-6 w-[96px] items-center border border-t-[#808080] border-r-white border-b-white border-l-[#808080] pl-1">
        <Ico w={9} h={6}>
          <path d="M3.500 .5L1 3l2.500 2.500M7.500 .5L5 3l2.500 2.500" strokeWidth="1.300" stroke="#000" />
        </Ico>
        <span className="ml-1 flex gap-0.5">
          <Ico w={16} h={16}>
            <path d="M1.500 1.500h13v13h-13z" fill="#fff" stroke="#c32020" strokeWidth="2.400" />
            <path d="M4 8.500h8v4H4zM5 7l6-3M6 7l5-1M4 10.500h8" stroke="#a01818" strokeWidth="1.300" />
          </Ico>
          <Ico w={17} h={16}>
            <circle cx="8.500" cy="8" r="7.500" fill="#2c5c8f" stroke="#7ba0c4" />
            <text x="5" y="12.500" fontFamily="Liberation Sans, sans-serif" fontSize="13" fontWeight="bold" fill="#fff" stroke="none">a</text>
          </Ico>
        </span>
        <time className="ml-1.5 font-['DejaVu_Sans_Mono',monospace] text-[10px]">17:53</time>
      </div>
    </div>
  </footer>
);

export default function App() {
  return (
    <div className="flex h-screen flex-col overflow-hidden bg-[#5f5f5f] font-['Liberation_Sans','Noto_Sans_CJK_SC',sans-serif] text-black">
      <Gradients />
      <MenuBar />
      <ControlBar />
      <div className="flex min-h-0 flex-1">
        <Toolbox />
        <DocumentArea />
        <Dock />
      </div>
      <Taskbar />
    </div>
  );
}
